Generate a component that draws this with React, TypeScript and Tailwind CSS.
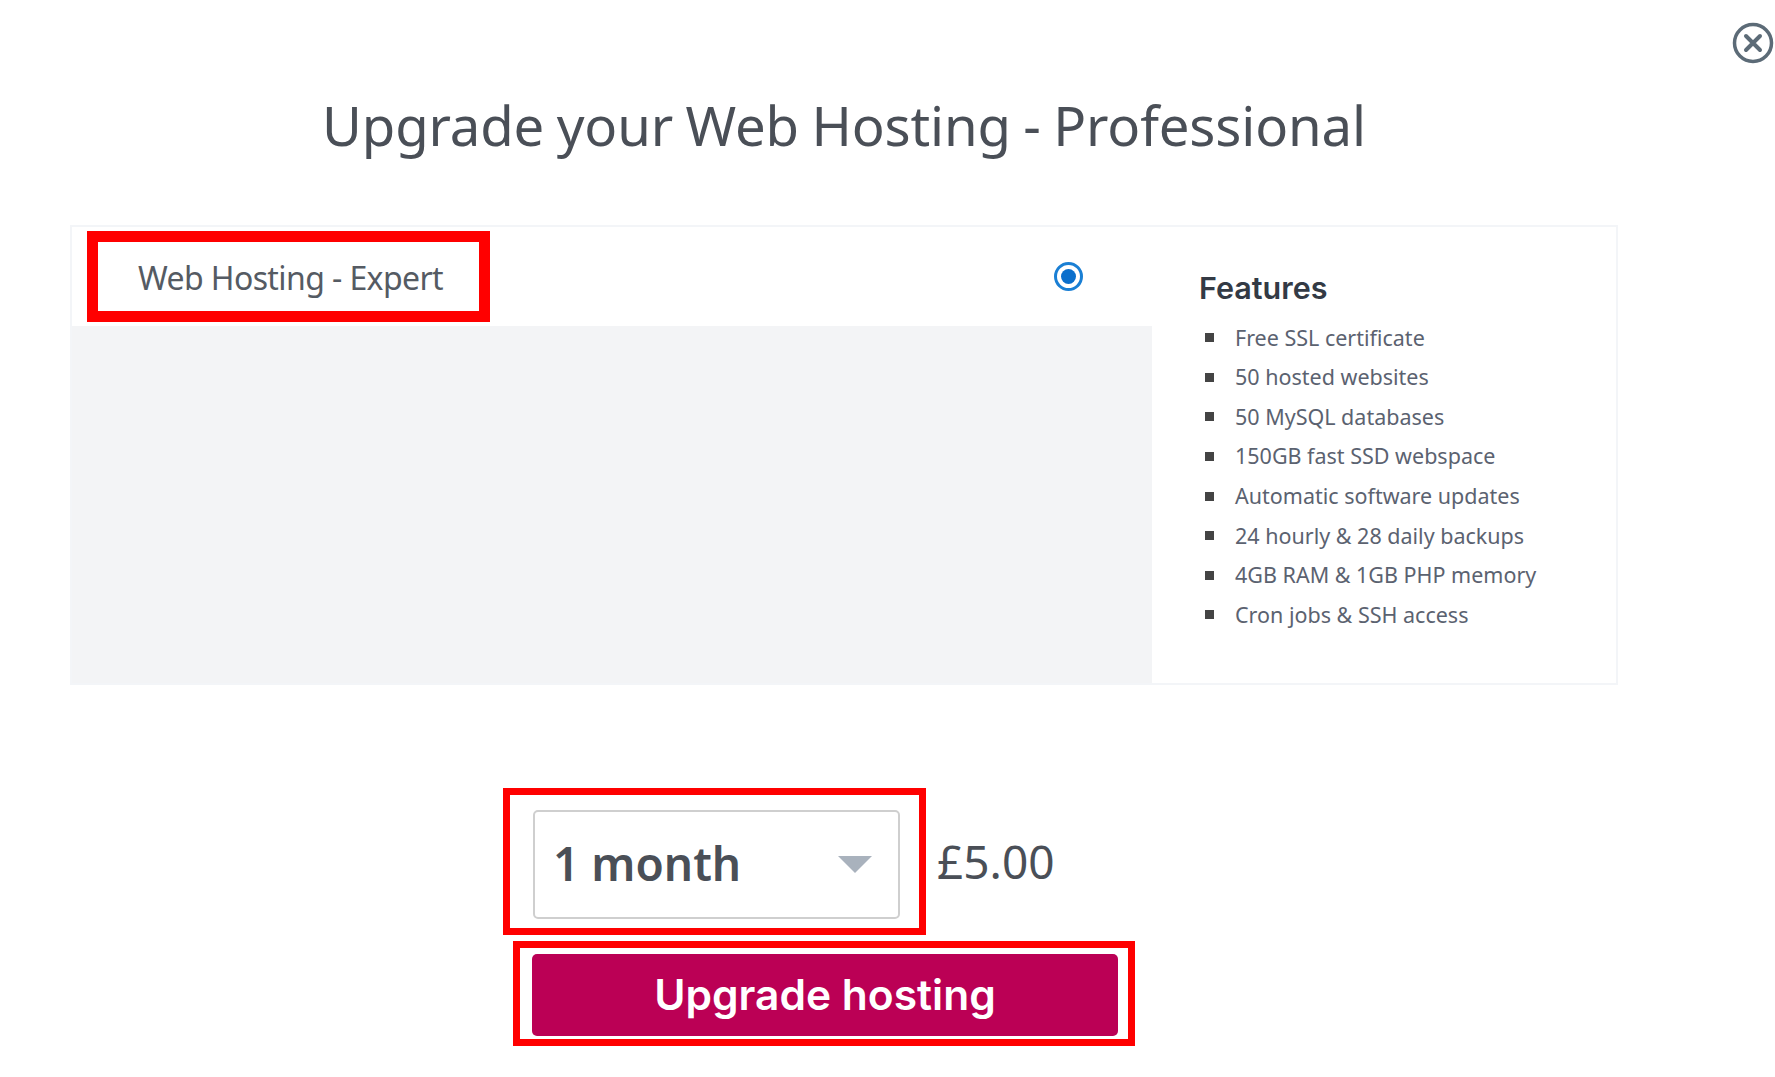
import React from "react";

const features = [
  "Free SSL certificate",
  "50 hosted websites",
  "50 MySQL databases",
  "150GB fast SSD webspace",
  "Automatic software updates",
  "24 hourly & 28 daily backups",
  "4GB RAM & 1GB PHP memory",
  "Cron jobs & SSH access",
];

function CloseIcon() {
  return (
    <svg width="44" height="44" viewBox="0 0 44 44" fill="none" stroke="#5c6b77">
      <circle cx="22" cy="22" r="18.5" strokeWidth="3.5" />
      <path d="M15 15L29 29M29 15L15 29" strokeWidth="4" strokeLinecap="round" />
    </svg>
  );
}

function Radio() {
  return (
    <span className="flex h-[29px] w-[29px] items-center justify-center rounded-full border-[3px] border-[#1a7fd4]">
      <span className="h-[15px] w-[15px] rounded-full bg-[#0b6fcc]" />
    </span>
  );
}

export default function App() {
  return (
    <div className="relative h-[1077px] w-[1775px] overflow-hidden bg-white font-['Noto_Sans',sans-serif]">
      <button className="absolute right-[0px] top-[21px]">
        <CloseIcon />
      </button>

      <div className="ml-[70px] w-[1548px]">
        <h1 className="pt-[87px] text-center text-[54.5px] leading-[76px] tracking-[-0.15px] [word-spacing:-1.5px] text-[#4a4f57]">
          Upgrade your Web Hosting - Professional
        </h1>

        {/* plan + features */}
        <div className="mt-[62px] flex h-[460px] border-2 border-[#f3f5f8]">
          <div className="flex w-[1080px] flex-col">
            <div className="flex h-[99px] items-start">
              <div className="ml-[15px] mt-[4px] flex h-[91px] w-[403px] items-center border-[11px] border-[#ff0000] pl-[40px]">
                <span className="mt-[2px] text-[32px] tracking-[-0.6px] text-[#555b63]">Web Hosting - Expert</span>
              </div>
              <div className="ml-[564px] mt-[35px]">
                <Radio />
              </div>
            </div>
            <div className="flex-1 bg-[#f3f4f6]" />
          </div>

          <div className="pl-[47px] pt-[39px]">
            <h3 className="font-['Inter',sans-serif] text-[30.5px] font-semibold leading-[44px] text-[#333a45]">Features</h3>
            <ul className="mt-[8px]">
              {features.map((f) => (
                <li key={f} className="flex h-[39.6px] items-center">
                  <span className="ml-[6px] h-[9px] w-[9px] bg-[#444]" />
                  <span className="ml-[21px] text-[21.5px] text-[#5b6270]">{f}</span>
                </li>
              ))}
            </ul>
          </div>
        </div>

        {/* term select and price */}
        <div className="ml-[433px] mt-[103px] flex items-center">
          <div className="border-[7px] border-[#ff0000] pb-[9px] pl-[23px] pr-[19px] pt-[15px]">
            <div className="flex h-[109px] w-[367px] items-center justify-between rounded-[5px] border-2 border-[#cfcfcf] pl-[18px] pr-[26px]">
              <span className="-mt-[2px] text-[46px] font-semibold text-[#4a4f57]">1 month</span>
              <svg width="34" height="17" viewBox="0 0 34 17">
                <path d="M0 0H34L17 17Z" fill="#a9b2bd" />
              </svg>
            </div>
          </div>
          <span className="ml-[11px] text-[46px] text-[#4a4f57]">£5.00</span>
        </div>

        <div className="ml-[443px] mt-[6px] w-[622px] border-[7px] border-[#ff0000] pb-[3px] pl-[12px] pr-[10px] pt-[6px]">
          <button className="flex h-[82px] w-full items-center justify-center rounded-[5px] bg-[#bb0055] font-['Inter',sans-serif] text-[42.5px] font-semibold text-white">
            Upgrade hosting
          </button>
        </div>
      </div>
    </div>
  );
}
